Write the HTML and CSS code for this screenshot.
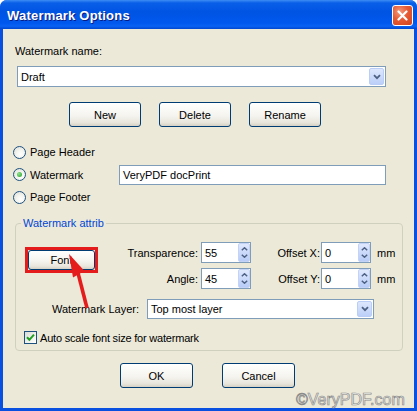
FILE: index.html
```html
<!DOCTYPE html>
<html>
<head>
<meta charset="utf-8">
<link rel="stylesheet" href="styles.css">
</head>
<body>
<div class="window">
  <div class="titlebar">
    <span class="title">Watermark Options</span>
    <span class="close"><svg width="11" height="11" viewBox="0 0 11 11"><path d="M1.5 1.5 L9.5 9.5 M9.5 1.5 L1.5 9.5" stroke="#fff" stroke-width="2.2" stroke-linecap="round"/></svg></span>
  </div>
  <div class="client">
    <div class="name-label">Watermark name:</div>
    <div class="combo name-combo">
      <span class="combo-text">Draft</span>
      <span class="combo-btn"><svg width="8" height="6" viewBox="0 0 8 6"><path d="M1 1.2 L4 4.2 L7 1.2" fill="none" stroke="#4d6185" stroke-width="1.8"/></svg></span>
    </div>
    <div class="btn-row">
      <button class="btn top-btn">New</button>
      <button class="btn top-btn">Delete</button>
      <button class="btn top-btn">Rename</button>
    </div>
    <div class="radios">
      <div class="radio-row"><span class="radio"></span><span>Page Header</span></div>
      <div class="radio-row mid"><span class="radio checked"><span class="dot"></span></span><span class="radio-label">Watermark</span><div class="textbox">VeryPDF docPrint</div></div>
      <div class="radio-row"><span class="radio"></span><span>Page Footer</span></div>
    </div>
    <fieldset class="group">
      <legend>Watermark attrib</legend>
      <div class="group-body">
        <div class="attr-grid">
          <div class="font-cell"><div class="highlight"><button class="btn font-btn">Font</button></div></div>
          <span class="lbl">Transparence:</span>
          <div class="spin"><span class="spin-val">55</span><span class="spin-btn"><svg width="7" height="4" viewBox="0 0 7 4"><path d="M0.8 3.3 L3.5 0.8 L6.2 3.3" fill="none" stroke="#4d6185" stroke-width="1.5"/></svg><svg width="7" height="4" viewBox="0 0 7 4"><path d="M0.8 0.7 L3.5 3.2 L6.2 0.7" fill="none" stroke="#4d6185" stroke-width="1.5"/></svg></span></div>
          <span class="lbl">Offset X:</span>
          <div class="spin spin2"><span class="spin-val">0</span><span class="spin-btn"><svg width="7" height="4" viewBox="0 0 7 4"><path d="M0.8 3.3 L3.5 0.8 L6.2 3.3" fill="none" stroke="#4d6185" stroke-width="1.5"/></svg><svg width="7" height="4" viewBox="0 0 7 4"><path d="M0.8 0.7 L3.5 3.2 L6.2 0.7" fill="none" stroke="#4d6185" stroke-width="1.5"/></svg></span></div>
          <span class="unit">mm</span>
          <span class="lbl">Angle:</span>
          <div class="spin"><span class="spin-val">45</span><span class="spin-btn"><svg width="7" height="4" viewBox="0 0 7 4"><path d="M0.8 3.3 L3.5 0.8 L6.2 3.3" fill="none" stroke="#4d6185" stroke-width="1.5"/></svg><svg width="7" height="4" viewBox="0 0 7 4"><path d="M0.8 0.7 L3.5 3.2 L6.2 0.7" fill="none" stroke="#4d6185" stroke-width="1.5"/></svg></span></div>
          <span class="lbl">Offset Y:</span>
          <div class="spin spin2"><span class="spin-val">0</span><span class="spin-btn"><svg width="7" height="4" viewBox="0 0 7 4"><path d="M0.8 3.3 L3.5 0.8 L6.2 3.3" fill="none" stroke="#4d6185" stroke-width="1.5"/></svg><svg width="7" height="4" viewBox="0 0 7 4"><path d="M0.8 0.7 L3.5 3.2 L6.2 0.7" fill="none" stroke="#4d6185" stroke-width="1.5"/></svg></span></div>
          <span class="unit">mm</span>
        </div>
        <div class="layer-row">
          <span class="layer-label">Watermark Layer:</span>
          <div class="combo layer-combo">
            <span class="combo-text">Top most layer</span>
            <span class="combo-btn small"><svg width="8" height="6" viewBox="0 0 8 6"><path d="M1 1.2 L4 4.2 L7 1.2" fill="none" stroke="#4d6185" stroke-width="1.8"/></svg></span>
          </div>
        </div>
        <div class="check-row">
          <span class="checkbox"><svg width="11" height="11" viewBox="0 0 11 11"><path d="M2 5.2 L4.4 7.8 L9 2.6" fill="none" stroke="#21a121" stroke-width="2"/></svg></span>
          <span class="check-label">Auto scale font size for watermark</span>
        </div>
      </div>
    </fieldset>
    <div class="ok-row">
      <button class="btn ok-btn">OK</button>
      <button class="btn ok-btn">Cancel</button>
    </div>
  </div>
  <svg class="arrow" width="417" height="411" viewBox="0 0 417 411">
    <line x1="87" y1="308" x2="77.5" y2="271" stroke="#e41c1c" stroke-width="3.6"/>
    <polygon points="69,254 84.5,271 73,277.5" fill="#e41c1c"/>
  </svg>
  <div class="copyright">©VeryPDF.com</div>
</div>
</body>
</html>
```
FILE: styles.css
```css
* { box-sizing: border-box; }
html, body { margin: 0; padding: 0; background: #ffffff; }
body {
  font-family: "Liberation Sans", Arial, sans-serif;
  font-size: 11px;
  color: #000;
}
.window {
  position: relative;
  width: 417px;
  height: 411px;
  display: flex;
  flex-direction: column;
  background: #0a50e0;
  border-radius: 7px 7px 0 0;
  overflow: hidden;
}
.titlebar {
  height: 29px;
  flex: none;
  display: flex;
  align-items: center;
  justify-content: space-between;
  padding: 1px 4px 0 7px;
  background: linear-gradient(to bottom, #3d8cf5 0%, #0a5fe8 10%, #0054e3 40%, #0058ee 80%, #0a62f3 90%, #0047d0 100%);
}
.title {
  color: #fff;
  font-weight: bold;
  font-size: 13px;
  letter-spacing: 0.2px;
  text-shadow: 1px 1px 0 #0a1a80;
}
.close {
  width: 21px;
  height: 21px;
  border: 1px solid #fff;
  border-radius: 3px;
  background: radial-gradient(circle at 35% 30%, #f39a7c 0%, #e65a34 45%, #d2421c 100%);
  display: flex;
  align-items: center;
  justify-content: center;
}
.client {
  flex: 1;
  background: #ece9d8;
  border-style: solid;
  border-color: #0a50e0;
  border-width: 0 3px 3px 3px;
  display: flex;
  flex-direction: column;
}
.name-label {
  margin: 16px 0 0 12px;
  line-height: 13px;
}
.combo {
  display: flex;
  align-items: center;
  background: #fff;
  border: 1px solid #7f9db9;
}
.name-combo {
  margin: 8px 0 0 14px;
  width: 369px;
  height: 21px;
}
.combo-text { padding-left: 3px; }
.combo-btn {
  margin-left: auto;
  margin-right: 1px;
  width: 15px;
  height: 17px;
  border: 1px solid #b9cdf6;
  border-radius: 2px;
  background: linear-gradient(to bottom, #dde7fd, #bccff8);
  display: flex;
  align-items: center;
  justify-content: center;
}
.combo-btn.small { height: 16px; }
.btn {
  font-family: "Liberation Sans", Arial, sans-serif;
  font-size: 11px;
  color: #000;
  padding: 0;
  border: 1px solid #003c74;
  border-radius: 3px;
  background: linear-gradient(to bottom, #ffffff 0%, #f5f4ef 55%, #e8e6dc 85%, #d6d0c4 100%);
}
.btn-row {
  margin: 15px 0 0 66px;
  display: flex;
  gap: 18px;
}
.top-btn { width: 72px; height: 25px; }
.radios {
  margin-top: 14px;
  display: flex;
  flex-direction: column;
}
.radio-row {
  height: 22px;
  display: flex;
  align-items: center;
  padding-left: 10px;
  gap: 4px;
}
.radio-row.mid { height: 23px; }
.radio {
  width: 13px;
  height: 13px;
  border-radius: 50%;
  border: 1px solid #1c5180;
  background: radial-gradient(circle at 60% 65%, #ffffff 0%, #f4f4f0 40%, #dcdcd4 100%);
  display: flex;
  align-items: center;
  justify-content: center;
}
.dot {
  width: 5px;
  height: 5px;
  border-radius: 50%;
  background: radial-gradient(circle at 35% 35%, #8fe08f, #21a121);
}
.radio-label { width: 85px; }
.textbox {
  width: 267px;
  height: 20px;
  background: #fff;
  border: 1px solid #7f9db9;
  padding-left: 3px;
  display: flex;
  align-items: center;
}
.group {
  margin: 9px 11px 0 12px;
  padding: 0;
  border: 1px solid #d0d0bf;
  border-radius: 4px;
  min-width: 0;
}
.group legend {
  margin-left: 5px;
  padding: 0 2px;
  color: #0046d5;
  line-height: 13px;
}
.group-body {
  padding: 12px 0 6px 0;
}
.attr-grid {
  display: grid;
  grid-template-columns: 109px 73px 53px 69px 51px 24px;
  grid-template-rows: 21px 21px;
  row-gap: 5px;
  align-items: center;
}
.font-cell {
  grid-row: 1 / span 2;
  align-self: start;
  padding: 5px 0 0 9px;
}
.highlight {
  width: 73px;
  height: 26px;
  border: 3px solid #e41c1c;
}
.font-btn {
  width: 67px;
  height: 20px;
  display: block;
}
.lbl { text-align: right; }
.spin {
  margin-left: 3px;
  width: 50px;
  height: 21px;
  background: #fff;
  border: 1px solid #7f9db9;
  display: flex;
  align-items: center;
}
.spin2 { margin-left: 1px; }
.spin-val { padding-left: 3px; }
.spin-btn {
  margin-left: auto;
  width: 12px;
  height: 19px;
  border: 1px solid #c3d3f8;
  border-radius: 2px;
  background: linear-gradient(to bottom, #dfe8fd, #b8ccf7);
  display: flex;
  flex-direction: column;
  align-items: center;
  justify-content: center;
  gap: 3px;
}
.spin-btn svg { display: block; }
.unit {
  padding-left: 6px;
  white-space: nowrap;
}
.layer-row {
  margin-top: 10px;
  padding-left: 36px;
  display: flex;
  align-items: center;
}
.layer-label { width: 95px; }
.layer-combo { width: 227px; height: 20px; }
.check-row {
  margin-top: 12px;
  padding-left: 8px;
  display: flex;
  align-items: center;
  gap: 3px;
  height: 13px;
}
.check-label { letter-spacing: -0.2px; }
.checkbox {
  width: 13px;
  height: 13px;
  border: 1px solid #1c5180;
  background: linear-gradient(135deg, #dcdcd5, #ffffff);
  display: flex;
  align-items: center;
  justify-content: center;
}
.ok-row {
  margin: 12px 0 0 117px;
  display: flex;
  gap: 29px;
}
.ok-btn { width: 73px; height: 25px; }
.arrow {
  position: absolute;
  left: 0;
  top: 0;
  pointer-events: none;
}
.copyright {
  position: absolute;
  left: 296px;
  top: 391px;
  font-size: 16px;
  line-height: 18px;
  color: #f4f4f0;
  -webkit-text-stroke: 0.7px #8a8a8a;
}
```
